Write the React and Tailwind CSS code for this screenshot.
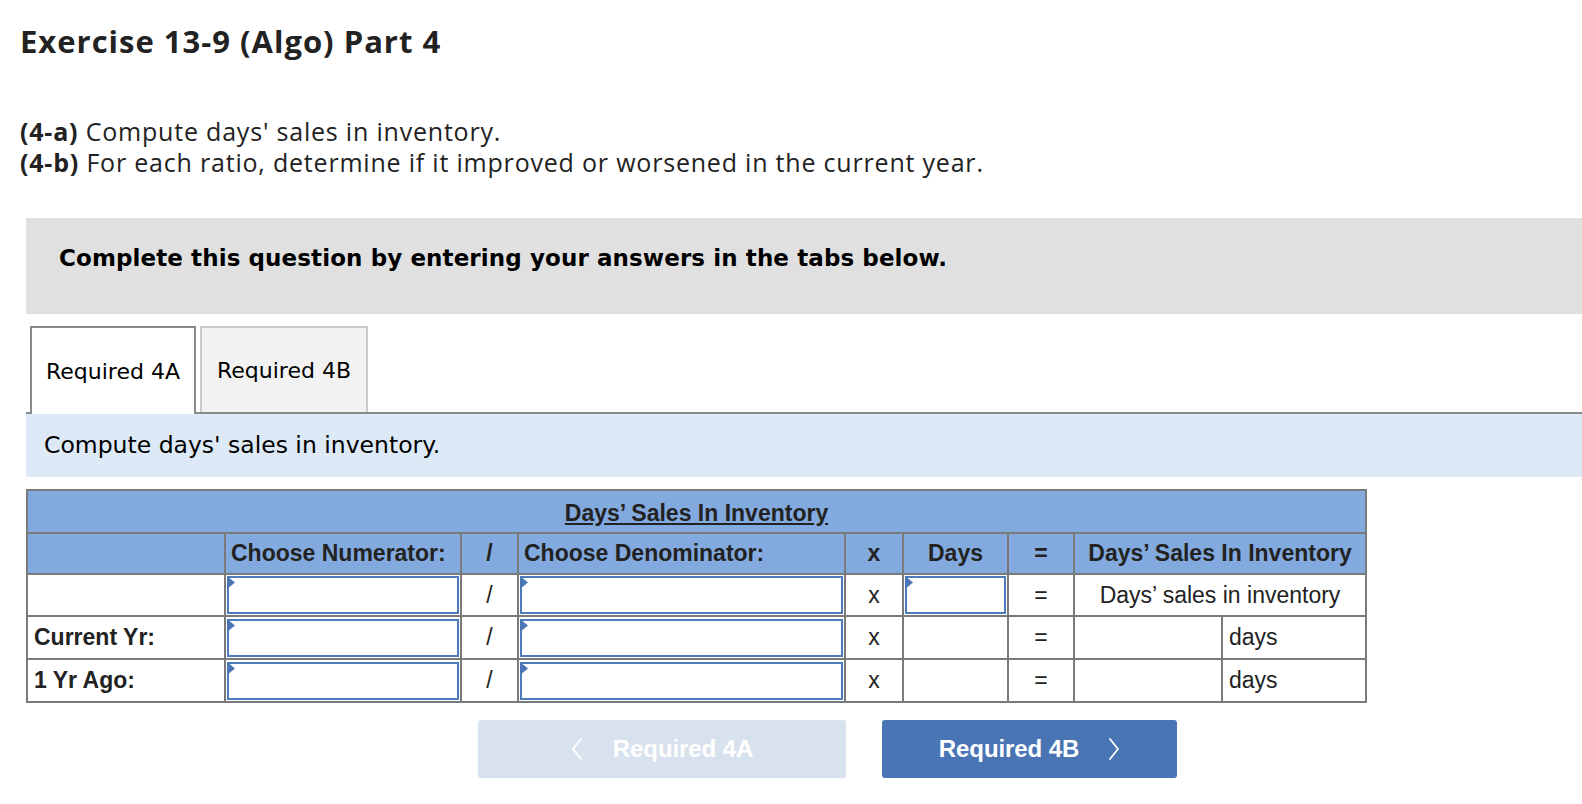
const cell = "border-2 border-[#7a7a7a]";

function Answer({ marker = true }) {
  return (
    <div className="relative h-[38px] w-full border-2 border-[#4f7cbd] bg-white">
      {marker && (
        <svg className="absolute -left-[2px] -top-[2px]" width="8" height="13" viewBox="0 0 8 13">
          <path d="M0 0 L8 6.5 L0 13 Z" fill="#4a76b5" />
        </svg>
      )}
    </div>
  );
}

function Chevron({ dir }) {
  const pts = dir === "left" ? "10,1 2,11 10,21" : "2,1 10,11 2,21";
  return (
    <svg width="12" height="22" viewBox="0 0 12 22" fill="none">
      <polyline points={pts} stroke="currentColor" strokeWidth="1.8" strokeLinecap="round" strokeLinejoin="round" />
    </svg>
  );
}

function DataRow({ label }) {
  return (
    <tr className="h-[43px]">
      <td className={`${cell} pl-[6px] font-bold`}>{label}</td>
      <td className={`${cell} p-px`}><Answer /></td>
      <td className={`${cell} text-center`}>/</td>
      <td className={`${cell} p-px`}><Answer /></td>
      <td className={`${cell} text-center`}>x</td>
      <td className={cell}></td>
      <td className={`${cell} text-center`}>=</td>
      <td className={cell}></td>
      <td className={`${cell} pl-[6px]`}>days</td>
    </tr>
  );
}

export default function App() {
  return (
    <div className="min-h-screen bg-white text-[#222] overflow-hidden">
      <h1 className="pl-[20px] pt-[23px] text-[31px] leading-[36px] font-bold font-['Open_Sans',sans-serif] tracking-[1px]">
        Exercise 13-9 (Algo) Part 4
      </h1>

      <div className="mt-[57px] pl-[20px] text-[25px] leading-[31px] font-['Open_Sans',sans-serif] tracking-[0.8px]">
        <p><span className="font-bold">(4-a)</span> Compute days' sales in inventory.</p>
        <p><span className="font-bold">(4-b)</span> For each ratio, determine if it improved or worsened in the current year.</p>
      </div>

      <div className="ml-[26px] mt-[40px]">
        <div className="h-[96px] bg-[#e0e0e0] pl-[33px] pt-[25px] text-[23px] leading-[30px] font-bold text-black font-['DejaVu_Sans',sans-serif] tracking-[0.1px]">
          Complete this question by entering your answers in the tabs below.
        </div>

        <div className="mt-[12px] flex items-end gap-[4px] pl-[4px] border-b-2 border-[#8a8a8a] font-['DejaVu_Sans',sans-serif] text-[22px] text-black">
          <div className="-mb-[2px] flex h-[88px] w-[166px] items-center justify-center border-2 border-b-0 border-[#8a8a8a] bg-white">
            Required 4A
          </div>
          <div className="flex h-[86px] w-[168px] items-center justify-center border-2 border-b-0 border-[#c8c8c8] bg-[#f2f2f2]">
            Required 4B
          </div>
        </div>

        <div className="flex h-[63px] items-center bg-[#dde9f7] pl-[18px] text-[23.5px] text-black font-['DejaVu_Sans',sans-serif]">
          Compute days' sales in inventory.
        </div>

        <table className="mt-[12px] table-fixed border-collapse font-['Liberation_Sans',Arial,sans-serif] text-[23px] text-[#222]">
          <colgroup>
            <col className="w-[198px]" />
            <col className="w-[236px]" />
            <col className="w-[57px]" />
            <col className="w-[327px]" />
            <col className="w-[58px]" />
            <col className="w-[105px]" />
            <col className="w-[66px]" />
            <col className="w-[148px]" />
            <col className="w-[144px]" />
          </colgroup>
          <tbody>
            <tr className="h-[43px] bg-[#82aade]">
              <td colSpan={9} className={`${cell} pt-[3px] text-center font-bold underline`}>
                Days’ Sales In Inventory
              </td>
            </tr>
            <tr className="h-[41px] bg-[#82aade] font-bold">
              <td className={cell}></td>
              <td className={`${cell} pl-[5px]`}>Choose Numerator:</td>
              <td className={`${cell} text-center`}>/</td>
              <td className={`${cell} pl-[5px]`}>Choose Denominator:</td>
              <td className={`${cell} text-center`}>x</td>
              <td className={`${cell} text-center`}>Days</td>
              <td className={`${cell} text-center`}>=</td>
              <td colSpan={2} className={`${cell} text-center`}>Days’ Sales In Inventory</td>
            </tr>
            <tr className="h-[42px]">
              <td className={cell}></td>
              <td className={`${cell} p-px`}><Answer /></td>
              <td className={`${cell} text-center`}>/</td>
              <td className={`${cell} p-px`}><Answer /></td>
              <td className={`${cell} text-center`}>x</td>
              <td className={`${cell} p-px`}><Answer /></td>
              <td className={`${cell} text-center`}>=</td>
              <td colSpan={2} className={`${cell} text-center`}>Days’ sales in inventory</td>
            </tr>
            <DataRow label="Current Yr:" />
            <DataRow label="1 Yr Ago:" />
          </tbody>
        </table>

        <div className="ml-[452px] mt-[17px] flex gap-[36px] font-['Liberation_Sans',Arial,sans-serif] text-[24px] font-bold text-white tracking-[-0.1px]">
          <button className="flex h-[58px] w-[368px] items-center justify-center gap-[30px] rounded-[3px] bg-[#d8e2ee]">
            <Chevron dir="left" />
            <span>Required 4A</span>
          </button>
          <button className="flex h-[58px] w-[295px] items-center justify-center gap-[29px] rounded-[3px] bg-[#4a75b4]">
            <span>Required 4B</span>
            <Chevron dir="right" />
          </button>
        </div>
      </div>
    </div>
  );
}
